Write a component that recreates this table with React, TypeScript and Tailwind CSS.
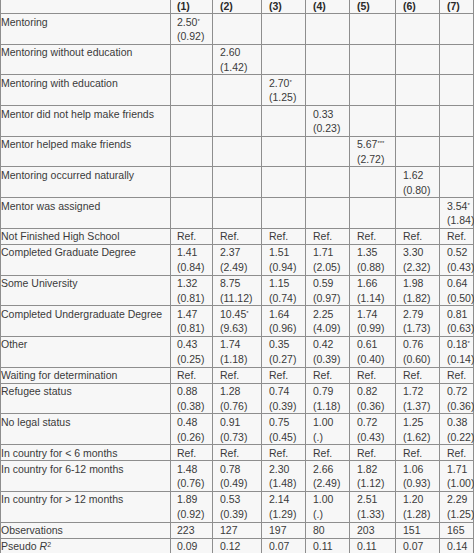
import React from 'react';

// regression table: coefficient / (standard error) per model
const rows: { label: React.ReactNode; cells: string[] }[] = [
  { label: 'Mentoring', cells: ['2.50*;(0.92)', '', '', '', '', '', ''] },
  { label: 'Mentoring without education', cells: ['', '2.60;(1.42)', '', '', '', '', ''] },
  { label: 'Mentoring with education', cells: ['', '', '2.70*;(1.25)', '', '', '', ''] },
  { label: 'Mentor did not help make friends', cells: ['', '', '', '0.33;(0.23)', '', '', ''] },
  { label: 'Mentor helped make friends', cells: ['', '', '', '', '5.67***;(2.72)', '', ''] },
  { label: 'Mentoring occurred naturally', cells: ['', '', '', '', '', '1.62;(0.80)', ''] },
  { label: 'Mentor was assigned', cells: ['', '', '', '', '', '', '3.54*;(1.84)'] },
  { label: 'Not Finished High School', cells: ['Ref.', 'Ref.', 'Ref.', 'Ref.', 'Ref.', 'Ref.', 'Ref.'] },
  {
    label: 'Completed Graduate Degree',
    cells: ['1.41;(0.84)', '2.37;(2.49)', '1.51;(0.94)', '1.71;(2.05)', '1.35;(0.88)', '3.30;(2.32)', '0.52;(0.43)'],
  },
  {
    label: 'Some University',
    cells: ['1.32;(0.81)', '8.75;(11.12)', '1.15;(0.74)', '0.59;(0.97)', '1.66;(1.14)', '1.98;(1.82)', '0.64;(0.50)'],
  },
  {
    label: 'Completed Undergraduate Degree',
    cells: ['1.47;(0.81)', '10.45*;(9.63)', '1.64;(0.96)', '2.25;(4.09)', '1.74;(0.99)', '2.79;(1.73)', '0.81;(0.63)'],
  },
  {
    label: 'Other',
    cells: ['0.43;(0.25)', '1.74;(1.18)', '0.35;(0.27)', '0.42;(0.39)', '0.61;(0.40)', '0.76;(0.60)', '0.18*;(0.14)'],
  },
  { label: 'Waiting for determination', cells: ['Ref.', 'Ref.', 'Ref.', 'Ref.', 'Ref.', 'Ref.', 'Ref.'] },
  {
    label: 'Refugee status',
    cells: ['0.88;(0.38)', '1.28;(0.76)', '0.74;(0.39)', '0.79;(1.18)', '0.82;(0.36)', '1.72;(1.37)', '0.72;(0.36)'],
  },
  {
    label: 'No legal status',
    cells: ['0.48;(0.26)', '0.91;(0.73)', '0.75;(0.45)', '1.00;(.)', '0.72;(0.43)', '1.25;(1.62)', '0.38;(0.22)'],
  },
  { label: 'In country for < 6 months', cells: ['Ref.', 'Ref.', 'Ref.', 'Ref.', 'Ref.', 'Ref.', 'Ref.'] },
  {
    label: 'In country for 6-12 months',
    cells: ['1.48;(0.76)', '0.78;(0.49)', '2.30;(1.48)', '2.66;(2.49)', '1.82;(1.12)', '1.06;(0.93)', '1.71;(1.00)'],
  },
  {
    label: 'In country for > 12 months',
    cells: ['1.89;(0.92)', '0.53;(0.39)', '2.14;(1.29)', '1.00;(.)', '2.51;(1.33)', '1.20;(1.28)', '2.29;(1.25)'],
  },
  { label: 'Observations', cells: ['223', '127', '197', '80', '203', '151', '165'] },
  {
    label: (
      <>
        Pseudo <i>R</i>
        <sup className="text-[7px]">2</sup>
      </>
    ),
    cells: ['0.09', '0.12', '0.07', '0.11', '0.11', '0.07', '0.14'],
  },
];

const Val = ({ text }: { text: string }) => {
  const m = text.match(/^(.*?)(\*+)$/);
  if (!m) return <>{text}</>;
  return (
    <>
      {m[1]}
      <sup className="text-[6px]">{m[2]}</sup>
    </>
  );
};

const cellBase = 'border-r border-b border-[#8e8e8e] whitespace-nowrap overflow-visible';

export default function App() {
  return (
    <div className="min-h-screen w-[474px] overflow-hidden bg-[#f7f7f7] font-['Liberation_Sans',Arial,sans-serif] text-[10.5px] text-[#3a3a3a]">
      <div className="grid grid-cols-[171px_42px_49px_44px_44px_46px_44px_34px]">
        {/* header */}
        <div className={`${cellBase} border-l h-[14px]`} />
        {[1, 2, 3, 4, 5, 6, 7].map((n) => (
          <div
            key={n}
            className={`${cellBase} h-[14px] leading-[13px] font-bold text-[#2a2a2a] ${n === 1 ? 'pl-[6px]' : 'pl-[7px]'}`}
          >
            ({n})
          </div>
        ))}

        {rows.map((row, i) => (
          <React.Fragment key={i}>
            <div className={`${cellBase} border-l pt-[0.5px] leading-[14.6px]`}>{row.label}</div>
            {row.cells.map((c, j) => {
              const [coef, se] = c.split(';');
              return (
                <div
                  key={j}
                  className={`${cellBase} pt-[0.5px] leading-[14.6px] flex flex-col ${j === 0 ? 'pl-[6px]' : 'pl-[7px]'}`}
                >
                  {coef ? <span><Val text={coef} /></span> : null}
                  {se ? <span>{se}</span> : null}
                </div>
              );
            })}
          </React.Fragment>
        ))}
      </div>
    </div>
  );
}
